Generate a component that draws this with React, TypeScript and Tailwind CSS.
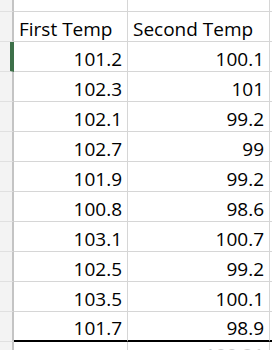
const rows: [string, string][] = [
  ["101.2", "100.1"],
  ["102.3", "101"],
  ["102.1", "99.2"],
  ["102.7", "99"],
  ["101.9", "99.2"],
  ["100.8", "98.6"],
  ["103.1", "100.7"],
  ["102.5", "99.2"],
  ["103.5", "100.1"],
  ["101.7", "98.9"],
];

const font = { fontFamily: "'Open Sans', Lato, sans-serif" };

function Row({
  a,
  b,
  left = false,
  selected = false,
  last = false,
}: {
  a: string;
  b: string;
  left?: boolean;
  selected?: boolean;
  last?: boolean;
}) {
  const line = last ? "border-b-2 border-b-black h-[30px]" : "border-b border-b-[#d6d6d6] h-[30px]";
  const align = left ? "justify-start pl-[5px]" : "justify-end pr-[5px]";
  return (
    <div className="flex">
      <div
        className={`w-[14px] shrink-0 h-[30px] bg-[#f3f3f3] border-b border-b-[#e0e0e0] ${
          selected ? "border-r-4 border-r-[#3d7049]" : "border-r-2 border-r-[#c4c4c4]"
        }`}
      />
      <div className={`w-[114px] shrink-0 flex items-end pb-[2px] border-r border-r-[#d6d6d6] ${line} ${align}`}>
        <span className="text-[19px] leading-[20px] text-black whitespace-nowrap">{a}</span>
      </div>
      <div className={`w-[142px] shrink-0 flex items-end pb-[2px] border-r border-r-[#d6d6d6] ${line} ${align}`}>
        <span className="text-[19px] leading-[20px] text-black whitespace-nowrap">{b}</span>
      </div>
      <div className={`flex-1 ${line}`} />
    </div>
  );
}

export default function App() {
  return (
    <div className="w-[272px] h-[350px] overflow-hidden bg-white" style={font}>
      <div className="flex h-[12px]">
        <div className="w-[14px] shrink-0 bg-[#f3f3f3] border-r-2 border-r-[#c4c4c4] border-b border-b-[#e0e0e0]" />
        <div className="w-[114px] shrink-0 border-r border-r-[#d6d6d6] border-b border-b-[#d6d6d6]" />
        <div className="w-[142px] shrink-0 border-r border-r-[#d6d6d6] border-b border-b-[#d6d6d6]" />
        <div className="flex-1 border-b border-b-[#d6d6d6]" />
      </div>
      <Row a="First Temp" b="Second Temp" left />
      {rows.map(([a, b], i) => (
        <Row key={i} a={a} b={b} selected={i === 0} last={i === rows.length - 1} />
      ))}
      <div className="flex h-[30px]">
        <div className="w-[14px] shrink-0 bg-[#f3f3f3] border-r-2 border-r-[#c4c4c4]" />
        <div className="w-[114px] shrink-0 border-r border-r-[#d6d6d6]" />
        <div className="w-[142px] shrink-0 flex justify-end pr-[5px] pt-[3px] border-r border-r-[#d6d6d6]">
          <span className="text-[19px] leading-[20px] text-[#cfcfcf]">100.21</span>
        </div>
        <div className="flex-1" />
      </div>
    </div>
  );
}
